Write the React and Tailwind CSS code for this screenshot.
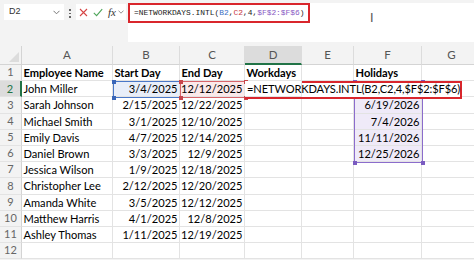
import React from "react";

const rows = [
  ["Employee Name", "Start Day", "End Day", "Workdays", "", "Holidays", ""],
  ["John Miller", "3/4/2025", "12/12/2025", "", "", "", ""],
  ["Sarah Johnson", "2/15/2025", "12/22/2025", "", "", "6/19/2026", ""],
  ["Michael Smith", "3/1/2025", "12/10/2025", "", "", "7/4/2026", ""],
  ["Emily Davis", "4/7/2025", "12/14/2025", "", "", "11/11/2026", ""],
  ["Daniel Brown", "3/3/2025", "12/9/2025", "", "", "12/25/2026", ""],
  ["Jessica Wilson", "1/9/2025", "12/18/2025", "", "", "", ""],
  ["Christopher Lee", "2/12/2025", "12/20/2025", "", "", "", ""],
  ["Amanda White", "3/5/2025", "12/12/2025", "", "", "", ""],
  ["Matthew Harris", "4/1/2025", "12/8/2025", "", "", "", ""],
  ["Ashley Thomas", "1/11/2025", "12/19/2025", "", "", "", ""],
  ["", "", "", "", "", "", ""],
];

const letters = ["A", "B", "C", "D", "E", "F", "G"];

function Handles({ color }) {
  const c = "absolute w-[4px] h-[4px] " + color;
  return (
    <>
      <span className={c + " -left-[2.5px] -top-[2.5px]"} />
      <span className={c + " -right-[2.5px] -top-[2.5px]"} />
      <span className={c + " -left-[2.5px] -bottom-[2.5px]"} />
      <span className={c + " -right-[2.5px] -bottom-[2.5px]"} />
    </>
  );
}

function cellBg(i, j) {
  if (i === 1 && j === 1) return "bg-[#e8eef9]";
  if (i === 1 && j === 2) return "bg-[#fbe9ea]";
  if (j === 5 && i >= 2 && i <= 5) return "bg-[#efeaf8]";
  return "bg-white";
}

export default function App() {
  return (
    <div className="w-[474px] h-[260px] overflow-hidden bg-[#f3f3f3] relative font-['Lato',sans-serif]">
      {/* Formula bar */}
      <div className="h-[46px] flex items-start pt-[3px]">
        <div className="ml-[4px] mt-[1px] w-[60px] h-[16px] bg-white flex items-center pl-[5px] pr-[4px] text-[9px] text-[#333] font-['Liberation_Sans',sans-serif]">
          <span className="flex-1">D2</span>
          <svg width="7" height="5" viewBox="0 0 7 5"><path d="M0.5 0.8 L3.5 3.8 L6.5 0.8" fill="none" stroke="#777" strokeWidth="1" /></svg>
        </div>
        <div className="w-[12px] flex flex-col items-center gap-[2px] mt-[6px]">
          <span className="w-[1.5px] h-[1.5px] bg-[#666]" />
          <span className="w-[1.5px] h-[1.5px] bg-[#666]" />
          <span className="w-[1.5px] h-[1.5px] bg-[#666]" />
        </div>
        <div className="w-[50px] h-[16px] mt-[1px] bg-white flex items-center pl-[3px] gap-[5px]">
          <svg width="9" height="9" viewBox="0 0 9 9"><path d="M1 1 L8 8 M8 1 L1 8" stroke="#d64545" strokeWidth="1.1" /></svg>
          <svg width="10" height="9" viewBox="0 0 10 9"><path d="M0.8 4.8 L3.6 7.6 L9.2 1.2" fill="none" stroke="#4ea55a" strokeWidth="1.1" /></svg>
          <span className="italic font-['Liberation_Serif',serif] text-[11px] text-[#333] leading-none">fx</span>
          <svg width="6" height="4" viewBox="0 0 6 4" className="-ml-[3px]"><path d="M0.5 0.6 L3 3.2 L5.5 0.6" fill="none" stroke="#888" strokeWidth="0.9" /></svg>
        </div>
        <div className="ml-[2px] flex-1 h-[39px] bg-white relative">
          <div className="absolute left-0 top-0 w-[182px] h-[20px] border-2 border-[#d9262c]" />
          <div className="pl-[6px] pt-[4px] text-[7.9px] leading-[12px] font-['Liberation_Mono',monospace] text-[#222] whitespace-nowrap">
            =NETWORKDAYS.INTL(<span className="text-[#3b6fc4]">B2</span>,<span className="text-[#c8383f]">C2</span>,4,<span className="text-[#8a5cc4]">$F$2:$F$6</span>)
          </div>
          <div className="absolute left-[242px] top-[9px] text-[#555] text-[12px] font-['DejaVu_Sans',sans-serif] leading-none">I</div>
        </div>
      </div>

      {/* Grid */}
      <div className="grid grid-cols-[22px_91px_67px_65px_57px_52px_68px_60px] relative">
        {/* header row */}
        <div className="h-[19px] relative border-b border-r border-[#d4d4d4] bg-[#f3f3f3]">
          <svg className="absolute right-[2px] bottom-[2px]" width="10" height="10" viewBox="0 0 10 10"><path d="M10 0 L10 10 L0 10 Z" fill="#dcdcdc" /></svg>
        </div>
        {letters.map((l) => (
          <div
            key={l}
            className={
              "h-[19px] flex items-center justify-center text-[11.5px] text-[#555] border-r border-[#dcdcdc] " +
              (l === "D" ? "bg-[#dcdcdc] border-b-2 border-b-[#217346]" : "bg-[#f3f3f3] border-b border-b-[#d4d4d4]")
            }
          >
            {l}
          </div>
        ))}

        {rows.map((r, i) => (
          <React.Fragment key={i}>
            <div
              className={
                "h-[16.2px] flex items-center justify-center text-[11px] border-b border-[#e3e3e3] " +
                (i === 1 ? "bg-[#dcdcdc] text-[#217346] border-r-2 border-r-[#217346]" : "bg-[#f3f3f3] text-[#666] border-r border-r-[#d4d4d4]")
              }
            >
              {i + 1}
            </div>
            {r.map((v, j) => {
              const bold = i === 0;
              const right = !bold && (j === 1 || j === 2 || j === 5);
              return (
                <div
                  key={j}
                  className={
                    "h-[16.2px] border-r border-b border-[#e3e3e3] flex items-center text-[11.1px] text-black whitespace-nowrap leading-none px-[1.5px] " +
                    cellBg(i, j) + " " +
                    (right ? "justify-end " : "") +
                    (bold ? "font-bold " : "") +
                    (i === 1 && j === 3 ? "overflow-visible relative z-20" : "overflow-hidden")
                  }
                >
                  {i === 1 && j === 3 ? (
                    <span className="absolute left-[2px] top-0 h-full flex items-center tracking-[-0.12px]">=NETWORKDAYS.INTL(B2,C2,4,$F$2:$F$6)</span>
                  ) : (
                    v
                  )}
                </div>
              );
            })}
          </React.Fragment>
        ))}

        {/* overlays: B2, C2, F2:F6, D2 edit */}
        <div className="absolute left-[113px] top-[35.2px] w-[68px] h-[17.2px] border-[1.5px] border-[#4a78c8] z-10">
          <Handles color="bg-[#3a66b8]" />
        </div>
        <div className="absolute left-[180px] top-[35.2px] w-[66px] h-[17.2px] border-[1.5px] border-[#d8656b] z-10">
          <Handles color="bg-[#c7454c]" />
        </div>
        <div className="absolute left-[354px] top-[35.2px] w-[69px] h-[82px] border-[1.5px] border-[#8b6ccc] z-10">
          <Handles color="bg-[#7a5bc0]" />
        </div>
        <div className="absolute left-[245px] top-[34.5px] w-[217px] h-[18px] border-2 border-[#d9262c] bg-white z-[15]" />
      </div>
    </div>
  );
}
